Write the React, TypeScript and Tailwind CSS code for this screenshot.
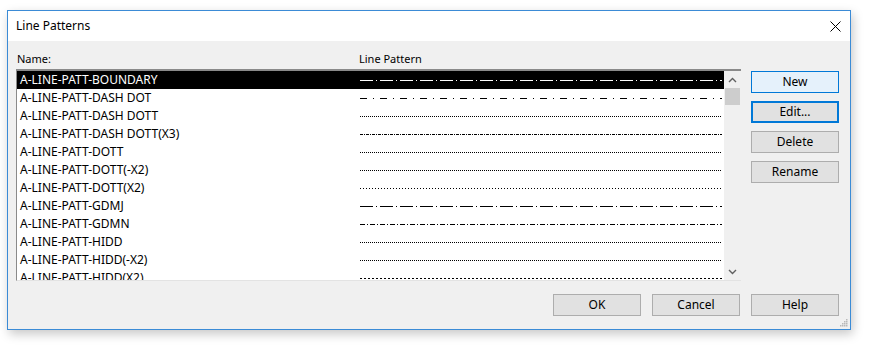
import React from 'react';

interface Pattern {
  name: string;
  dash: string;
}

const patterns: Pattern[] = [
  { name: 'A-LINE-PATT-BOUNDARY', dash: '13 3 1 3' },
  { name: 'A-LINE-PATT-DASH DOT', dash: '7 6 1 6' },
  { name: 'A-LINE-PATT-DASH DOTT', dash: '1 1' },
  { name: 'A-LINE-PATT-DASH DOTT(X3)', dash: '3 1 1 1' },
  { name: 'A-LINE-PATT-DOTT', dash: '1 1' },
  { name: 'A-LINE-PATT-DOTT(-X2)', dash: '1 1' },
  { name: 'A-LINE-PATT-DOTT(X2)', dash: '1 2' },
  { name: 'A-LINE-PATT-GDMJ', dash: '13 3 1 3' },
  { name: 'A-LINE-PATT-GDMN', dash: '5 2 1 2' },
  { name: 'A-LINE-PATT-HIDD', dash: '1 1' },
  { name: 'A-LINE-PATT-HIDD(-X2)', dash: '1 1' },
  { name: 'A-LINE-PATT-HIDD(X2)', dash: '2 2' },
];

const font = { fontFamily: '"Noto Sans", "Open Sans", sans-serif' };

const Btn: React.FC<{ label: string; variant?: 'hover' | 'focus' }> = ({ label, variant }) => {
  const cls =
    variant === 'hover'
      ? 'border border-[#0078d7] bg-[#e5f1fb]'
      : variant === 'focus'
      ? 'border-2 border-[#0078d7] bg-[#e1e1e1]'
      : 'border border-[#adadad] bg-[#e1e1e1]';
  return (
    <div className={`w-[88px] h-[22px] flex items-center justify-center text-[12px] text-black ${cls}`}>
      {label}
    </div>
  );
};

const Chevron: React.FC<{ up?: boolean }> = ({ up }) => (
  <svg width="9" height="6" viewBox="0 0 9 6">
    <path
      d={up ? 'M1 5 L4.5 1.5 L8 5' : 'M1 1 L4.5 4.5 L8 1'}
      fill="none"
      stroke="#606060"
      strokeWidth="1.4"
    />
  </svg>
);

const PatternLine: React.FC<{ dash: string; color: string }> = ({ dash, color }) => (
  <svg width="362" height="3" className="block">
    <line x1="0" y1="1.5" x2="362" y2="1.5" stroke={color} strokeWidth="1" strokeDasharray={dash} />
  </svg>
);

export default function App() {
  return (
    <div className="w-[870px] h-[347px] bg-white overflow-hidden pt-[10px] pl-[7px]" style={font}>
      <div className="w-[844px] h-[320px] border border-[#3b8bd6] bg-[#f0f0f0] flex flex-col shadow-[2px_4px_10px_rgba(0,0,0,0.22)]">
        {/* Title bar */}
        <div className="h-[30px] bg-white flex items-center justify-between pl-[8px] pr-[9px] shrink-0">
          <span className="text-[12px] text-black">Line Patterns</span>
          <svg width="11" height="11" viewBox="0 0 11 11">
            <path d="M0.5 0.5 L10.5 10.5 M10.5 0.5 L0.5 10.5" stroke="#000" strokeWidth="1" />
          </svg>
        </div>

        {/* Body */}
        <div className="flex-1 relative flex flex-col pl-[8px] pr-[11px] pt-[9px]">
          <div className="flex gap-[10px]">
            {/* Left: list */}
            <div className="w-[725px] flex flex-col">
              <div className="h-[19px] flex items-center text-[11px] text-black">
                <span className="w-[343px] pl-[1px]">Name:</span>
                <span>Line Pattern</span>
              </div>
              <div className="h-[212px] bg-white border-t-2 border-l border-[#8a8a8a] border-b border-b-[#e3e3e3] flex">
                <div className="flex-1 overflow-hidden">
                  {patterns.map((p, i) => {
                    const sel = i === 0;
                    return (
                      <div
                        key={p.name}
                        className={`h-[18px] flex items-center ${sel ? 'bg-black text-white' : 'text-black'}`}
                      >
                        <span className="w-[343px] pl-[3px] text-[12px] whitespace-nowrap">{p.name}</span>
                        <PatternLine dash={p.dash} color={sel ? '#fff' : '#000'} />
                      </div>
                    );
                  })}
                </div>
                {/* Scrollbar */}
                <div className="w-[17px] bg-[#f0f0f0] flex flex-col items-center">
                  <div className="h-[17px] flex items-center justify-center">
                    <Chevron up />
                  </div>
                  <div className="w-[15px] h-[17px] bg-[#cdcdcd]" />
                  <div className="flex-1" />
                  <div className="h-[17px] flex items-center justify-center">
                    <Chevron />
                  </div>
                </div>
              </div>
            </div>

            {/* Right: buttons */}
            <div className="flex flex-col gap-[8px] pt-[21px]">
              <Btn label="New" variant="hover" />
              <Btn label="Edit..." variant="focus" />
              <Btn label="Delete" />
              <Btn label="Rename" />
            </div>
          </div>

          {/* Bottom buttons */}
          <div className="flex justify-end gap-[11px] mt-[13px]">
            <Btn label="OK" />
            <Btn label="Cancel" />
            <Btn label="Help" />
          </div>

          {/* Resize grip */}
          <svg width="8" height="8" viewBox="0 0 8 8" className="absolute right-[2px] bottom-[2px]">
            {[
              [6, 0],
              [4, 2],
              [6, 2],
              [2, 4],
              [4, 4],
              [6, 4],
              [0, 6],
              [2, 6],
              [4, 6],
              [6, 6],
            ].map(([x, y], i) => (
              <rect key={i} x={x} y={y} width="1.5" height="1.5" fill="#b8b8b8" />
            ))}
          </svg>
        </div>
      </div>
    </div>
  );
}
